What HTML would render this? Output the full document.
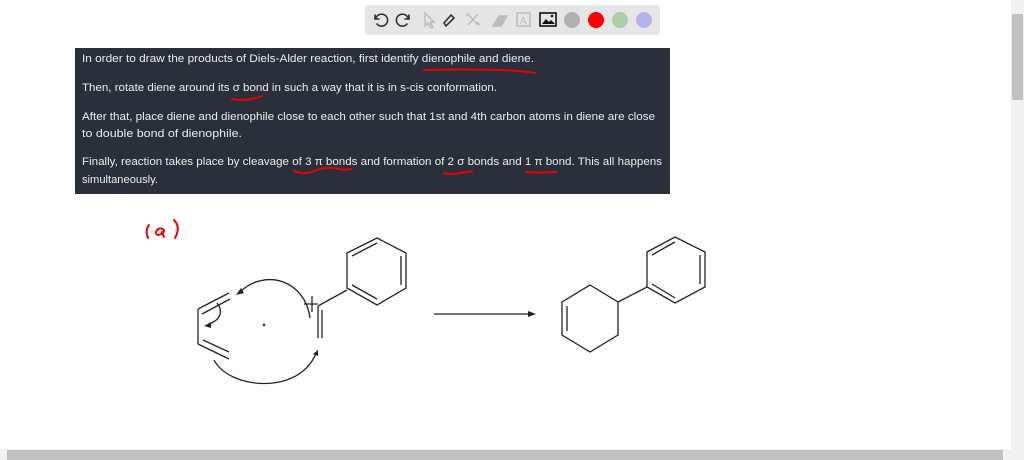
<!DOCTYPE html>
<html><head><meta charset="utf-8"><style>
html,body{margin:0;padding:0;background:#fff;width:1024px;height:460px;overflow:hidden}
svg{display:block}
text{font-family:"Liberation Sans",sans-serif}
</style></head><body>
<svg width="1024" height="460" viewBox="0 0 1024 460" xmlns="http://www.w3.org/2000/svg">
<rect x="365" y="5" width="295" height="30" rx="4" fill="#e6e6e6"/>
<g fill="none" stroke="#333" stroke-width="1.6" stroke-linecap="round">
 <path d="M375 15 v4 h4 M376 18 a6 6 0 1 1 1 6"/>
 <path d="M409 15 v4 h-4 M408 18 a6 6 0 1 0 -1 6"/>
 <path d="M446 26 l-2 -3 l7 -8 l3 3 l-8 8 z"/>
</g>
<g fill="none" stroke="#bbb" stroke-width="1.4">
 <path d="M425 13 l0 13 l3 -3 l3 5 l2 -1 l-3 -5 h4 z"/>
 <path d="M468 14 l10 11 M478 14 l-10 11 M466 16 l3 -3 M477 22 l3 3"/>
 <path d="M493 26 l6 -10 h8 l-6 10 z" fill="#bbb"/>
 <rect x="517" y="13" width="13" height="13"/>
 <text x="520" y="24" font-size="10" fill="#bbb" stroke="none">A</text>
</g>
<rect x="540" y="13" width="16" height="13" fill="none" stroke="#111" stroke-width="1.6"/>
<path d="M542 24 l4 -5 l3 3 l2 -2 l4 4 z" fill="#111"/>
<circle cx="552" cy="16" r="1.3" fill="#111"/>
<circle cx="572" cy="20" r="8" fill="#b0b0b0"/>
<circle cx="596" cy="20" r="8" fill="#f00"/>
<circle cx="620" cy="20" r="8" fill="#a9d0a9"/>
<circle cx="644" cy="20" r="8" fill="#b3b3ee"/>
<rect x="75" y="48" width="595" height="146" fill="#2a303b"/>
<g fill="#ececec" font-size="11">
<text x="82" y="62" textLength="452" lengthAdjust="spacingAndGlyphs">In order to draw the products of Diels-Alder reaction, first identify dienophile and diene.</text>
<text x="82" y="91" textLength="415" lengthAdjust="spacingAndGlyphs">Then, rotate diene around its σ bond in such a way that it is in s-cis conformation.</text>
<text x="82" y="120" textLength="573" lengthAdjust="spacingAndGlyphs">After that, place diene and dienophile close to each other such that 1st and 4th carbon atoms in diene are close</text>
<text x="82" y="137" textLength="160" lengthAdjust="spacingAndGlyphs">to double bond of dienophile.</text>
<text x="82" y="165" textLength="580" lengthAdjust="spacingAndGlyphs">Finally, reaction takes place by cleavage of 3 π bonds and formation of 2 σ bonds and 1 π bond. This all happens</text>
<text x="82" y="183" textLength="76" lengthAdjust="spacingAndGlyphs">simultaneously.</text>
</g>
<g fill="none" stroke="#e00" stroke-width="2" stroke-linecap="round">
<path d="M424 70 q40 -1 75 0 q25 1 36 3"/>
<path d="M232 99 q14 3 30 -3"/>
<path d="M294 171 q12 4 20 0 q12 -5 25 -2 q6 1 12 0"/>
<path d="M444 173 q8 2 16 0 q8 -1 12 -2"/>
<path d="M526 172 q12 1 30 0"/>
<path d="M149 225 q-4 5 -1 13 M156 232 q3 -6 8 -2 q0 4 -6 5 q-3 -1 -2 -3 M162 232 l2 5 M174 220 q7 7 1 18"/>
</g>
<g fill="none" stroke="#222" stroke-width="1.3">
<path d="M198 309 L229 293 M202 314 L230 299"/>
<path d="M198 309 L198 344"/>
<path d="M198 344 L229 359 M203 340 L229 352"/>
<path d="M318 306 L318 338 M322 310 L322 338"/>
<path d="M318 306 L347 290"/>
<path d="M347 253 L377 238 L406 253 L406 288 L377 305 L347 288 Z"/>
<path d="M352 256 L377 243 M401 256 L401 285 M352 285 L377 299"/>
<path d="M310 318 C305 280 265 268 240 292"/>
<path d="M217 303 C224 312 220 320 209 324"/>
<path d="M214 360 C230 390 300 395 316 353"/>
<path d="M312 296 L312 312 M304 304 L318 304"/>
</g>
<g fill="#222">
<path d="M236 295 l5 -7 l3 5 z"/>
<path d="M204 326 l7 -4 l0 6 z"/>
<path d="M318 350 l-5 4 l5 2 z"/>
<circle cx="264" cy="325" r="1.2"/>
</g>
<path d="M434 314 L530 314" stroke="#222" stroke-width="1.3"/>
<path d="M536 314 l-8 -3 l0 6 z" fill="#222"/>
<g fill="none" stroke="#222" stroke-width="1.3">
<path d="M590 285 L618 302 L618 335 L590 352 L562 335 L562 302 Z"/>
<path d="M567 306 L567 331"/>
<path d="M618 302 L647 287"/>
<path d="M647 252 L675 237 L705 252 L705 287 L675 303 L647 287 Z"/>
<path d="M652 255 L675 242 M700 255 L700 284 M652 284 L675 298"/>
</g>
<rect x="1011" y="0" width="13" height="449" fill="#f1f1f1"/>
<rect x="1012" y="14" width="11" height="86" fill="#c1c1c1"/>
<rect x="0" y="449" width="1024" height="11" fill="#f1f1f1"/>
<rect x="7" y="450" width="996" height="10" fill="#c1c1c1"/>
</svg>
</body></html>
